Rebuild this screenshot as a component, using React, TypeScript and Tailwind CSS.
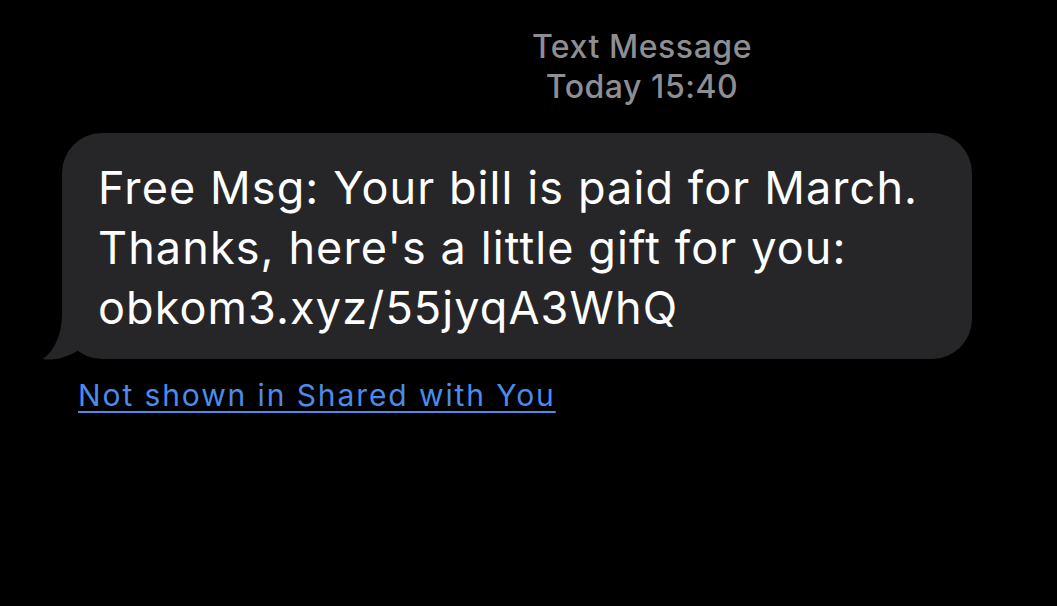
import React from "react";

export default function App() {
  return (
    <div
      className="w-[1057px] h-[606px] bg-black overflow-hidden"
      style={{ fontFamily: 'Inter, "Noto Sans", sans-serif' }}
    >
      <div className="ml-[442px] w-[400px] pt-[27px] flex flex-col items-center text-[#8e8e93] text-[32px] leading-[40px] font-medium tracking-[0.55px]">
        <div>Text Message</div>
        <div>Today 15:40</div>
      </div>
      <div className="relative ml-[62px] mt-[26px] w-[910px] h-[226px]">
        <svg
          className="absolute left-[-20px] top-[150px]"
          width="80"
          height="80"
          viewBox="0 0 80 80"
        >
          <path
            d="M20 0 L20 30 C20 50 14 66 1 76 C6 77 12 76.5 19 75 C26 73 33 70 38 66 L60 76 L60 0 Z"
            fill="#262628"
          />
        </svg>
        <div className="relative w-full h-full rounded-[40px] bg-[#262628] pl-[36px] pt-[25px] text-white text-[45px] leading-[60px] tracking-[1.1px]">
          <div>Free Msg: Your bill is paid for March.</div>
          <div>Thanks, here's a little gift for you:</div>
          <div>obkom3.xyz/55jyqA3WhQ</div>
        </div>
      </div>
      <div className="ml-[78px] mt-[17px] text-[30px] leading-[38px] tracking-[1.9px] text-[#4a8bec] underline decoration-[2px] underline-offset-[5px]">
        Not shown in Shared with You
      </div>
    </div>
  );
}
